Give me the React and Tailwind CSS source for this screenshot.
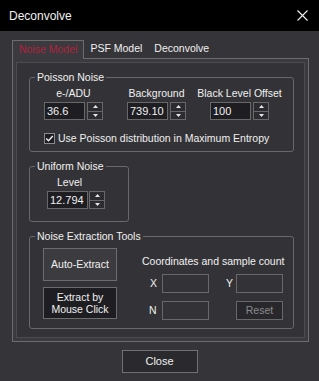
import React from "react";

const Spin = () => (
  <div className="flex flex-col w-[16px] h-[18px] border border-[#686868] bg-[#2c2c30]">
    <div className="flex-1 flex items-center justify-center border-b border-[#686868]">
      <svg width="5" height="3" viewBox="0 0 5 3"><path d="M2.5 0L5 3H0z" fill="#e8e8e8" /></svg>
    </div>
    <div className="flex-1 flex items-center justify-center">
      <svg width="5" height="3" viewBox="0 0 5 3"><path d="M0 0H5L2.5 3z" fill="#e8e8e8" /></svg>
    </div>
  </div>
);

const Num = ({ v, w = "w-[41px]" }) => (
  <div className={`${w} h-[18px] border border-[#686868] bg-[#1e1e22] flex items-center pl-[2px] text-[11px] leading-none`}>
    {v}
  </div>
);

const Col = ({ label, value }) => (
  <div className="flex flex-col items-center gap-[3px]">
    <div className="leading-[12px] whitespace-nowrap">{label}</div>
    <div className="flex gap-[2px]">
      <Num v={value} />
      <Spin />
    </div>
  </div>
);

const Box = () => (
  <div className="w-[47px] h-[19px] border border-[#686868] bg-[#333337]" />
);

export default function App() {
  return (
    <div className="w-[319px] h-[381px] bg-[#353539] text-[#f0f0f0] text-[10.5px] font-['Liberation_Sans',Arial,sans-serif] flex flex-col">
      <div className="h-[31px] bg-black flex items-center justify-between pl-[9px] pr-[11px] shrink-0">
        <span className="text-[12px]">Deconvolve</span>
        <svg width="11" height="11" viewBox="0 0 11 11">
          <path d="M0.5 0.5L10.5 10.5M10.5 0.5L0.5 10.5" stroke="#f0f0f0" strokeWidth="1.1" />
        </svg>
      </div>
      <div className="pt-[9px] pl-[12px]">
        <div className="flex h-[18px] items-stretch">
          <div className="relative z-10 -mb-px px-[6px] flex items-center border border-b-0 border-[#6c6c6c] bg-[#3b3b3f] text-[#b0213d]">
            Noise Model
          </div>
          <div className="px-[6px] flex items-center">PSF Model</div>
          <div className="px-[6px] flex items-center">Deconvolve</div>
        </div>
        <div className="w-[297px] h-[284px] border border-[#6c6c6c] bg-[#3b3b3f] p-[3px]">
          <div className="h-full border border-[#4c4c50] bg-[#333337] pl-[12px] pt-[8px]">
            <fieldset className="w-[265px] border border-[#686868] rounded-[3px]">
              <legend className="ml-[5px] px-[2px] leading-[12px]">Poisson Noise</legend>
              <div className="pt-[4px] pb-[7px]">
                <div className="grid grid-cols-[83px_83px_83px] pl-[2px]">
                  <Col label="e-/ADU" value="36.6" />
                  <Col label="Background" value="739.10" />
                  <Col label="Black Level Offset" value="100" />
                </div>
                <div className="mt-[12px] pl-[14px] flex items-center gap-[3px] h-[12px]">
                  <div className="w-[11px] h-[11px] border border-[#8a8a8a] bg-[#1e1e22] flex items-center justify-center">
                    <svg width="9" height="9" viewBox="0 0 9 9">
                      <path d="M1.2 4.5L3.5 6.8L7.8 2" stroke="#f0f0f0" strokeWidth="1.4" fill="none" />
                    </svg>
                  </div>
                  <span className="leading-[12px] whitespace-nowrap">Use Poisson distribution in Maximum Entropy</span>
                </div>
              </div>
            </fieldset>
            <fieldset className="mt-[8px] w-[100px] border border-[#686868] rounded-[3px]">
              <legend className="ml-[5px] px-[2px] leading-[12px]">Uniform Noise</legend>
              <div className="pt-[4px] pb-[12px] pl-[17px] flex flex-col gap-[3px]">
                <div className="leading-[12px] pl-[10px]">Level</div>
                <div className="flex gap-[1px]">
                  <Num v="12.794" w="w-[41px]" />
                  <Spin />
                </div>
              </div>
            </fieldset>
            <fieldset className="mt-[8px] w-[265px] border border-[#686868] rounded-[3px]">
              <legend className="ml-[5px] px-[2px] leading-[12px]">Noise Extraction Tools</legend>
              <div className="pt-[6px] pb-[8px] pl-[13px] flex gap-[25px]">
                <div className="flex flex-col gap-[6px] w-[74px]">
                  <div className="h-[33px] border border-[#6c6c6c] bg-[#3c3c40] flex items-center justify-center">
                    Auto-Extract
                  </div>
                  <div className="h-[32px] border border-[#6c6c6c] bg-[#1e1e22] flex flex-col items-center justify-center leading-[12px] text-center">
                    <span>Extract by</span>
                    <span>Mouse Click</span>
                  </div>
                </div>
                <div className="flex flex-col pt-[7px]">
                  <div className="leading-[12px] whitespace-nowrap">Coordinates and sample count</div>
                  <div className="mt-[7px] flex items-center pl-[8px]">
                    <span className="w-[12px]">X</span>
                    <Box />
                    <span className="w-[27px] text-right pr-[3px]">Y</span>
                    <Box />
                  </div>
                  <div className="mt-[8px] flex items-center pl-[7px]">
                    <span className="w-[13px]">N</span>
                    <Box />
                    <span className="w-[27px]" />
                    <div className="w-[47px] h-[19px] border border-[#686868] bg-[#28282c] text-[#8a8a8a] flex items-center justify-center">
                      Reset
                    </div>
                  </div>
                </div>
              </div>
            </fieldset>
          </div>
        </div>
      </div>
      <div className="mt-[8px] flex justify-center">
        <div className="w-[76px] h-[23px] border border-[#707070] bg-[#2a2a2e] flex items-center justify-center text-[11px]">
          Close
        </div>
      </div>
    </div>
  );
}
